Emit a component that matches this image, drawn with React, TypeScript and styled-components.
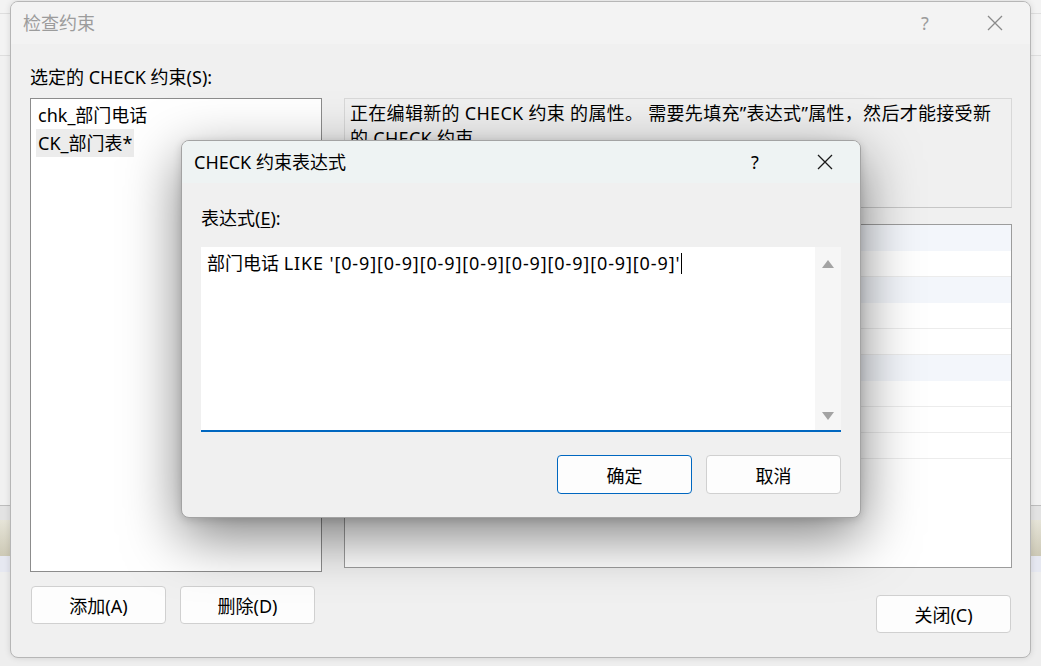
import React from 'react'
import styled, { createGlobalStyle } from 'styled-components'

const GlobalStyle = createGlobalStyle`
  html, body {
    margin: 0;
    padding: 0;
    width: 100%;
    height: 100%;
    overflow: hidden;
  }
  body {
    background: #ededed;
    font-family: "Noto Sans", "Noto Sans CJK SC", sans-serif;
    color: #000;
  }
  * { box-sizing: border-box; }
`

/* ---------- desktop behind the dialogs ---------- */

const Desktop = styled.div`
  position: relative;
  width: 1041px;
  height: 666px;
  overflow: hidden;
  display: flex;
  flex-direction: column;
  background: #f0f0f0;
`

const BackBand = styled.div<{ $h: number; $bg: string; $line?: string }>`
  height: ${p => p.$h}px;
  background: ${p => p.$bg};
  border-bottom: ${p => (p.$line ? `1px solid ${p.$line}` : 'none')};
  flex-shrink: 0;
`

/* ---------- generic window parts ---------- */

const Window = styled.div`
  position: absolute;
  left: 10px;
  top: 1px;
  width: 1021px;
  height: 657px;
  border: 1px solid #b6b6b6;
  border-radius: 8px;
  background: #f0f0f0;
  overflow: hidden;
  display: flex;
  flex-direction: column;
  box-shadow: 0 0 6px rgba(0, 0, 0, 0.12);
`

const TitleBar = styled.div<{ $bg: string }>`
  height: 42px;
  flex-shrink: 0;
  display: flex;
  align-items: center;
  padding-left: 12px;
  background: ${p => p.$bg};
`

const TitleText = styled.div<{ $inactive?: boolean }>`
  flex: 1;
  font-size: 18px;
  line-height: 24px;
  color: ${p => (p.$inactive ? '#9c9c9c' : '#000')};
  white-space: nowrap;
`

const TitleIcon = styled.div<{ $inactive?: boolean }>`
  width: 70px;
  height: 42px;
  display: flex;
  align-items: center;
  justify-content: center;
  font-size: 18px;
  color: ${p => (p.$inactive ? '#9c9c9c' : '#000')};
`

const Btn = styled.button<{ $primary?: boolean; $h?: number }>`
  width: 135px;
  height: ${p => p.$h ?? 38}px;
  padding: 0;
  border: 1px solid ${p => (p.$primary ? '#0067c0' : '#d0d0d0')};
  border-radius: 4px;
  background: #fdfdfd;
  font-family: inherit;
  font-size: 18px;
  color: #000;
  cursor: default;
`

const Label = styled.div`
  font-size: 18px;
  line-height: 24px;
  height: 24px;
  white-space: nowrap;
`

const Mnemonic = styled.span`
  text-decoration: underline;
  text-underline-offset: 2px;
`

/* ---------- main window body ---------- */

const Body = styled.div`
  flex: 1;
  padding: 21px 18px 0 19px;
  display: flex;
  flex-direction: column;
`

const MainGrid = styled.div`
  margin-top: 9px;
  display: grid;
  grid-template-columns: 292px 668px;
  column-gap: 22px;
`

const Column = styled.div`
  display: flex;
  flex-direction: column;
`

const ListBox = styled.div`
  height: 474px;
  background: #fff;
  border: 1px solid #8c8c8c;
  padding: 2px 5px;
`

const ListItem = styled.div<{ $selected?: boolean }>`
  display: table;
  height: 28px;
  padding: 0 2px;
  font-size: 18px;
  line-height: 28px;
  background: ${p => (p.$selected ? '#ececec' : 'transparent')};
`

const ButtonRow = styled.div<{ $top: number; $end?: boolean; $inset?: number }>`
  margin-top: ${p => p.$top}px;
  display: flex;
  gap: 14px;
  padding: 0 ${p => (p.$end ? p.$inset ?? 0 : 0)}px 0 ${p => (p.$end ? 0 : p.$inset ?? 0)}px;
  justify-content: ${p => (p.$end ? 'flex-end' : 'flex-start')};
`

const Description = styled.div`
  height: 110px;
  border: 1px solid #d8d8d8;
  border-bottom-color: #c6c6c6;
  background: #f0f0f0;
  padding: 2px 5px;
  font-size: 18px;
  line-height: 25px;
  letter-spacing: 0.3px;
  white-space: nowrap;
  overflow: hidden;
`

const PropertyGrid = styled.div`
  margin-top: 16px;
  height: 344px;
  background: #fff;
  border: 1px solid #9c9c9c;
  display: flex;
  flex-direction: column;
`

const PropRow = styled.div<{ $category?: boolean }>`
  height: 26px;
  flex-shrink: 0;
  background: ${p => (p.$category ? '#f3f6fb' : '#fff')};
  border-bottom: 1px solid ${p => (p.$category ? '#f3f6fb' : '#ececec')};
`

/* ---------- modal expression dialog ---------- */

const Modal = styled.div`
  position: absolute;
  left: 181px;
  top: 140px;
  width: 680px;
  height: 378px;
  border: 1px solid #a3a3a3;
  border-radius: 8px;
  background: #f0f0f0;
  overflow: hidden;
  display: flex;
  flex-direction: column;
  box-shadow: 0 18px 56px rgba(0, 0, 0, 0.5), 0 2px 8px rgba(0, 0, 0, 0.14);
`

const ModalBody = styled.div`
  flex: 1;
  padding: 23px 19px 0 19px;
  display: flex;
  flex-direction: column;
`

const ExprBox = styled.div`
  margin-top: 17px;
  height: 185px;
  display: flex;
  background: #fff;
  border-bottom: 2px solid #0067c0;
`

const ExprText = styled.div`
  flex: 1;
  padding: 4px 6px;
  font-size: 18px;
  line-height: 24px;
  white-space: nowrap;
`

const Latin = styled.span`
  letter-spacing: 0.88px;
`

const Caret = styled.span`
  display: inline-block;
  width: 1px;
  height: 21px;
  margin-left: 1px;
  background: #000;
  vertical-align: -4px;
`

const ScrollBar = styled.div`
  width: 26px;
  background: #f6f6f6;
  display: flex;
  flex-direction: column;
  justify-content: space-between;
  align-items: center;
  padding: 13px 0 10px;
`

const Arrow = ({ down }: { down?: boolean }) => (
  <svg width="12" height="8" viewBox="0 0 12 8">
    <path d={down ? 'M0 0 H12 L6 8 Z' : 'M0 8 H12 L6 0 Z'} fill="#a3a3a3" />
  </svg>
)

const CloseGlyph = ({ color }: { color: string }) => (
  <svg width="16" height="16" viewBox="0 0 16 16">
    <path d="M1 1 L15 15 M15 1 L1 15" stroke={color} strokeWidth="1.3" fill="none" />
  </svg>
)

const propRows = [true, false, true, false, false, true, false, false, false]

export default function App() {
  return (
    <>
      <GlobalStyle />
      <Desktop>
        <BackBand $h={14} $bg="#f3f3f3" $line="#dedede" />
        <BackBand $h={42} $bg="#f3f3f3" $line="#dedede" />
        <BackBand $h={450} $bg="#f1f1f1" $line="#bdbdbd" />
        <BackBand $h={14} $bg="#e3e3e3" />
        <BackBand $h={36} $bg="linear-gradient(#e6e4d8, #cdc9b6)" />
        <BackBand $h={16} $bg="#e6e8f1" />
        <BackBand $h={100} $bg="#eeeeee" />

        <Window>
          <TitleBar $bg="#f3f3f3">
            <TitleText $inactive>检查约束</TitleText>
            <TitleIcon $inactive>?</TitleIcon>
            <TitleIcon $inactive>
              <CloseGlyph color="#8a8a8a" />
            </TitleIcon>
          </TitleBar>
          <Body>
            <Label>选定的 CHECK 约束(S):</Label>
            <MainGrid>
              <Column>
                <ListBox>
                  <ListItem>chk_部门电话</ListItem>
                  <ListItem $selected>CK_部门表*</ListItem>
                </ListBox>
                <ButtonRow $top={14} $inset={1}>
                  <Btn>添加(A)</Btn>
                  <Btn>删除(D)</Btn>
                </ButtonRow>
              </Column>
              <Column>
                <Description>
                  正在编辑新的 CHECK 约束 的属性。 需要先填充”表达式”属性，然后才能接受新
                  <br />
                  的 CHECK 约束。
                </Description>
                <PropertyGrid>
                  {propRows.map((c, i) => (
                    <PropRow key={i} $category={c} />
                  ))}
                </PropertyGrid>
                <ButtonRow $top={27} $end $inset={1}>
                  <Btn>关闭(C)</Btn>
                </ButtonRow>
              </Column>
            </MainGrid>
          </Body>
        </Window>

        <Modal>
          <TitleBar $bg="#eef3f3">
            <TitleText>CHECK 约束表达式</TitleText>
            <TitleIcon>?</TitleIcon>
            <TitleIcon>
              <CloseGlyph color="#1a1a1a" />
            </TitleIcon>
          </TitleBar>
          <ModalBody>
            <Label>
              表达式(<Mnemonic>E</Mnemonic>):
            </Label>
            <ExprBox>
              <ExprText>
                部门电话 <Latin>LIKE '[0-9][0-9][0-9][0-9][0-9][0-9][0-9][0-9]'</Latin>
                <Caret />
              </ExprText>
              <ScrollBar>
                <Arrow />
                <Arrow down />
              </ScrollBar>
            </ExprBox>
            <ButtonRow $top={23} $end>
              <Btn $primary $h={39}>
                确定
              </Btn>
              <Btn $h={39}>取消</Btn>
            </ButtonRow>
          </ModalBody>
        </Modal>
      </Desktop>
    </>
  )
}
